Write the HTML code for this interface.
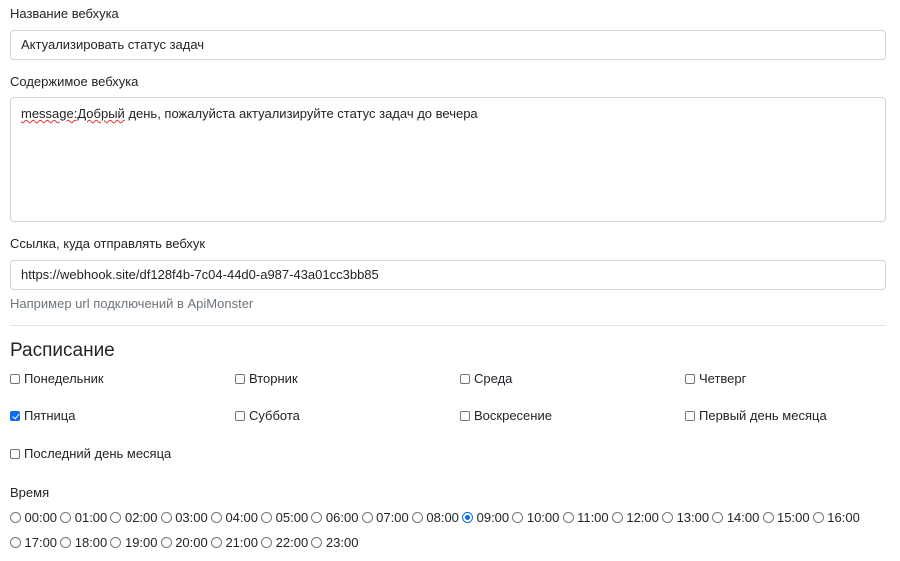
<!DOCTYPE html>
<html><head><meta charset="utf-8"><style>
body{margin:0;background:#fff;font-family:"Liberation Sans",sans-serif;font-size:13px;color:#212529;width:900px;height:561px;overflow:hidden;position:relative}
.a{position:absolute}
.lbl{left:10px}
.inp{left:10px;width:876px;border:1px solid #ced4da;border-radius:4px;box-sizing:border-box;padding:0 10px}
.cb{position:absolute;display:flex;align-items:center}
.box{width:10px;height:10px;border:1px solid #767676;border-radius:2px;margin-right:4px;box-sizing:border-box;background:#fff}
.chk{background:#0b6cf0;border-color:#0b6cf0;position:relative}
.chk:after{content:"";position:absolute;left:2.5px;top:0px;width:3px;height:6px;border:solid #fff;border-width:0 1.5px 1.5px 0;transform:rotate(40deg)}
.row{position:absolute;left:10px;display:flex;align-items:center;white-space:nowrap}
.r{width:11px;height:11px;border:1px solid #767676;border-radius:50%;box-sizing:border-box;margin-right:3.5px;display:inline-block}
.rs{border-color:#0b6cf0;position:relative}
.rs:after{content:"";position:absolute;left:2px;top:2px;width:5px;height:5px;border-radius:50%;background:#0b6cf0}
.it{display:flex;align-items:center;margin-right:3.2px}
</style></head><body>
<div class="a lbl" style="top:6px">Название вебхука</div>
<div class="a inp" style="top:30px;height:30px;line-height:28px">Актуализировать статус задач</div>
<div class="a lbl" style="top:74px">Содержимое вебхука</div>
<div class="a inp" style="top:97px;height:125px;padding-top:8px"><span style="text-decoration:underline wavy #e03030;text-decoration-thickness:1px">message:Добрый</span> день, пожалуйста актуализируйте статус задач до вечера</div>
<div class="a lbl" style="top:236px">Ссылка, куда отправлять вебхук</div>
<div class="a inp" style="top:260px;height:30px;line-height:28px">https://webhook.site/df128f4b-7c04-44d0-a987-43a01cc3bb85</div>
<div class="a lbl" style="top:296px;color:#6c757d">Например url подключений в ApiMonster</div>
<div class="a" style="left:10px;width:876px;top:325px;border-top:1px solid #e2e4e6"></div>
<div class="a lbl" style="top:340px;font-size:19px;font-weight:500">Расписание</div>
<div class="cb" style="left:10px;top:371px"><span class="box"></span>Понедельник</div>
<div class="cb" style="left:235px;top:371px"><span class="box"></span>Вторник</div>
<div class="cb" style="left:460px;top:371px"><span class="box"></span>Среда</div>
<div class="cb" style="left:685px;top:371px"><span class="box"></span>Четверг</div>
<div class="cb" style="left:10px;top:408px"><span class="box chk"></span>Пятница</div>
<div class="cb" style="left:235px;top:408px"><span class="box"></span>Суббота</div>
<div class="cb" style="left:460px;top:408px"><span class="box"></span>Воскресение</div>
<div class="cb" style="left:685px;top:408px"><span class="box"></span>Первый день месяца</div>
<div class="cb" style="left:10px;top:446px"><span class="box"></span>Последний день месяца</div>
<div class="a lbl" style="top:485px">Время</div>
<div class="row" style="top:510px">
<span class="it"><span class="r"></span>00:00</span><span class="it"><span class="r"></span>01:00</span><span class="it"><span class="r"></span>02:00</span><span class="it"><span class="r"></span>03:00</span><span class="it"><span class="r"></span>04:00</span><span class="it"><span class="r"></span>05:00</span><span class="it"><span class="r"></span>06:00</span><span class="it"><span class="r"></span>07:00</span><span class="it"><span class="r"></span>08:00</span><span class="it"><span class="r rs"></span>09:00</span><span class="it"><span class="r"></span>10:00</span><span class="it"><span class="r"></span>11:00</span><span class="it"><span class="r"></span>12:00</span><span class="it"><span class="r"></span>13:00</span><span class="it"><span class="r"></span>14:00</span><span class="it"><span class="r"></span>15:00</span><span class="it"><span class="r"></span>16:00</span>
</div>
<div class="row" style="top:535px">
<span class="it"><span class="r"></span>17:00</span><span class="it"><span class="r"></span>18:00</span><span class="it"><span class="r"></span>19:00</span><span class="it"><span class="r"></span>20:00</span><span class="it"><span class="r"></span>21:00</span><span class="it"><span class="r"></span>22:00</span><span class="it"><span class="r"></span>23:00</span>
</div>
</body></html>
